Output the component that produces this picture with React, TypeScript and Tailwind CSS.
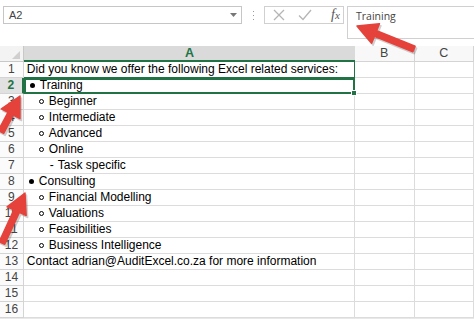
import React from "react";

type Pt = [number, number];

function Arrow({ tail, tip }: { tail: Pt; tip: Pt }) {
  const dx = tip[0] - tail[0];
  const dy = tip[1] - tail[1];
  const len = Math.hypot(dx, dy);
  const ux = dx / len;
  const uy = dy / len;
  const px = -uy;
  const py = ux;
  const headLen = 20;
  const headHalf = 10.5;
  const shaftHalf = 3;
  const bx = tip[0] - ux * headLen;
  const by = tip[1] - uy * headLen;
  const pts: Pt[] = [
    [tail[0] + px * shaftHalf, tail[1] + py * shaftHalf],
    [bx + px * shaftHalf, by + py * shaftHalf],
    [bx + px * headHalf, by + py * headHalf],
    [tip[0], tip[1]],
    [bx - px * headHalf, by - py * headHalf],
    [bx - px * shaftHalf, by - py * shaftHalf],
    [tail[0] - px * shaftHalf, tail[1] - py * shaftHalf],
  ];
  const d = pts.map((p) => p.join(",")).join(" ");
  return (
    <g>
      <polygon points={d} fill="#000" opacity={0.18} transform="translate(1.5,2)" strokeLinejoin="round" stroke="#000" strokeWidth={1.5} />
      <polygon points={d} fill="#e5423b" stroke="#e5423b" strokeWidth={1.5} strokeLinejoin="round" />
    </g>
  );
}

const rows: { text: string; mark?: "dot" | "circle" | "dash" }[] = [
  { text: "Did you know we offer the following Excel related services:" },
  { text: "Training", mark: "dot" },
  { text: "Beginner", mark: "circle" },
  { text: "Intermediate", mark: "circle" },
  { text: "Advanced", mark: "circle" },
  { text: "Online", mark: "circle" },
  { text: "Task specific", mark: "dash" },
  { text: "Consulting", mark: "dot" },
  { text: "Financial Modelling", mark: "circle" },
  { text: "Valuations", mark: "circle" },
  { text: "Feasibilities", mark: "circle" },
  { text: "Business Intelligence", mark: "circle" },
  { text: "Contact adrian@AuditExcel.co.za for more information" },
  { text: "" },
  { text: "" },
  { text: "" },
];

function CellContent({ r }: { r: (typeof rows)[number] }) {
  if (r.mark === "dot") {
    return (
      <span className="flex items-center">
        <span className="ml-[2px] mr-[5px] inline-block h-[5px] w-[5px] rounded-full bg-black" />
        <span>{r.text}</span>
      </span>
    );
  }
  if (r.mark === "circle") {
    return (
      <span className="flex items-center">
        <span className="ml-[12px] mr-[5px] inline-block h-[5px] w-[5px] rounded-full border border-black" />
        <span>{r.text}</span>
      </span>
    );
  }
  if (r.mark === "dash") {
    return (
      <span className="flex items-center">
        <span className="ml-[23px] mr-[4px]">-</span>
        <span>{r.text}</span>
      </span>
    );
  }
  return <span>{r.text}</span>;
}

export default function App() {
  return (
    <div className="relative h-[319px] w-[474px] overflow-hidden bg-white font-['Liberation_Sans',Arial,sans-serif]">
      {/* Formula bar area */}
      <div className="flex h-[46px] items-start pt-[6px]">
        <div className="ml-[3px] flex h-[18px] w-[239px] items-center justify-between border border-[#c6c6c6] pl-[5px] pr-[4px] text-[11px] text-[#444]">
          <span>A2</span>
          <svg width="7" height="4" viewBox="0 0 7 4">
            <polygon points="0,0 7,0 3.5,4" fill="#777" />
          </svg>
        </div>
        <div className="flex h-[18px] w-[22px] flex-col items-center justify-center gap-[3px]">
          <span className="h-[1px] w-[1px] bg-[#999]" />
          <span className="h-[1px] w-[1px] bg-[#999]" />
          <span className="h-[1px] w-[1px] bg-[#999]" />
        </div>
        <div className="flex h-[18px] w-[80px] items-center border border-[#d0d0d0]">
          <svg className="ml-[8px]" width="12" height="12" viewBox="0 0 12 12">
            <path d="M1 1 L11 11 M11 1 L1 11" stroke="#b5b5b5" strokeWidth="1.3" fill="none" />
          </svg>
          <svg className="ml-[13px]" width="14" height="12" viewBox="0 0 14 12">
            <path d="M1 6.5 L5 10.5 L13 1" stroke="#b5b5b5" strokeWidth="1.3" fill="none" />
          </svg>
          <span className="ml-[19px] font-['Liberation_Serif',serif] text-[14px] italic leading-none text-[#555]">
            f<span className="text-[11px]">x</span>
          </span>
        </div>
        <div className="w-[3px]" />
        <div className="h-[33px] flex-1 border-y border-l border-[#d0d0d0] pl-[8px] pt-[2px] font-['Open_Sans',sans-serif] text-[10.5px] text-[#444]">
          Training
        </div>
      </div>

      {/* Grid */}
      <div className="flex flex-col">
        <div className="flex h-[16px]">
          <div className="relative w-[24px] border-r border-b border-[#c8c8c8] bg-[#f3f3f3]">
            <svg className="absolute right-[3px] bottom-[2px]" width="8" height="8" viewBox="0 0 8 8">
              <polygon points="8,0 8,8 0,8" fill="#cfcfcf" />
            </svg>
          </div>
          <div className="flex w-[334px] items-center justify-center border-b-2 border-[#217346] bg-[#dadada] text-[12.5px] font-bold leading-none text-[#217346]">
            A
          </div>
          <div className="flex w-[60px] items-center justify-center border-r border-b border-[#d4d4d4] bg-[#f8f8f8] text-[12.5px] leading-none text-[#444]">
            B
          </div>
          <div className="flex w-[60px] items-center justify-center border-r border-b border-[#d4d4d4] bg-[#f8f8f8] text-[12.5px] leading-none text-[#444]">
            C
          </div>
        </div>
        {rows.map((r, i) => {
          const sel = i === 1;
          const first = i === 0;
          return (
            <div key={i} className="flex h-[16px]">
              <div
                className={
                  sel
                    ? "flex w-[24px] items-end justify-center border-r-2 border-b border-r-[#217346] border-b-[#d4d4d4] bg-[#e1e1e1] pb-[1px] text-[12px] font-bold leading-[13px] text-[#217346]"
                    : "flex w-[24px] items-end justify-center border-r border-b border-[#d4d4d4] bg-[#fbfbfb] pb-[1px] text-[12px] leading-[13px] text-[#444]"
                }
              >
                {i + 1}
              </div>
              <div
                className={
                  sel
                    ? "relative flex w-[334px] items-end whitespace-nowrap border-2 border-[#217346] pl-[2px] text-[12px] leading-[14px] text-black"
                    : first
                    ? "flex w-[334px] items-end whitespace-nowrap border-r border-b border-r-[#217346] border-b-[#217346] pl-[3px] pb-[1px] text-[12px] leading-[14px] text-black"
                    : "flex w-[334px] items-end whitespace-nowrap border-r border-b border-[#dcdcdc] pl-[3px] pb-[1px] text-[12px] leading-[14px] text-black"
                }
              >
                <CellContent r={r} />
                {sel && (
                  <span className="absolute right-[-4px] bottom-[-4px] h-[6px] w-[6px] border border-white bg-[#217346]" />
                )}
              </div>
              <div className="w-[60px] border-r border-b border-[#dcdcdc]" />
              <div className="w-[60px] border-r border-b border-[#dcdcdc]" />
            </div>
          );
        })}
        <div className="h-[4px] bg-[#e8e8e8]" />
      </div>

      {/* Annotation arrows */}
      <svg className="pointer-events-none absolute left-0 top-0" width="474" height="319" viewBox="0 0 474 319">
        <Arrow tail={[414, 49]} tip={[357, 26]} />
        <Arrow tail={[1, 132]} tip={[20, 96]} />
        <Arrow tail={[2, 243]} tip={[25, 193]} />
      </svg>
    </div>
  );
}
